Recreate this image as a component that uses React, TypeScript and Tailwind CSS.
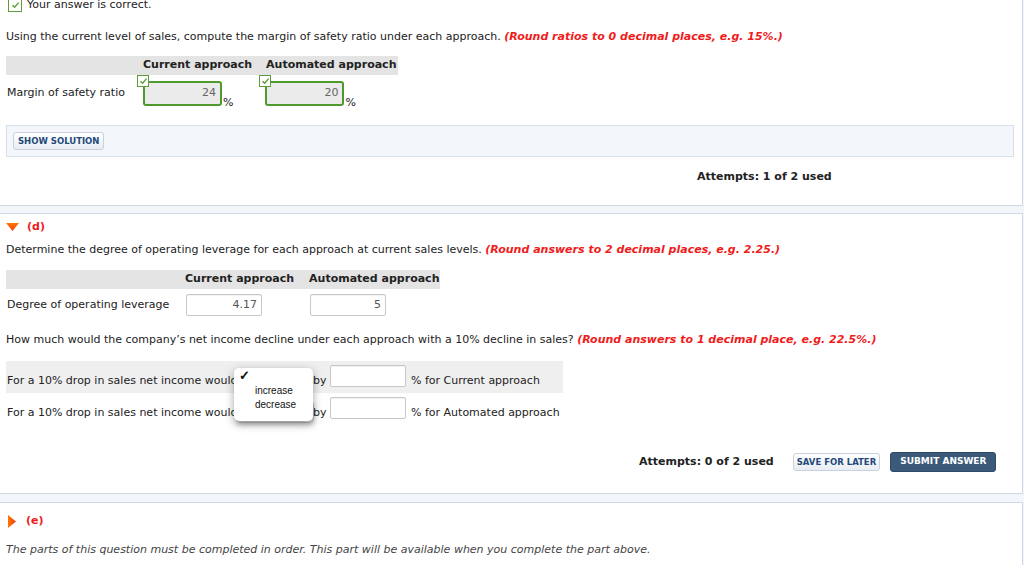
import React from "react";

function CheckBox({ className = "" }: { className?: string }) {
  return (
    <span className={`flex h-[12px] w-[12px] items-center justify-center border border-[#5d9c3a] bg-white ${className}`}>
      <svg width="9" height="8" viewBox="0 0 9 8">
        <path d="M1.5 4.2 L3.6 6.2 L7.6 1.6" fill="none" stroke="#5d9c3a" strokeWidth="1.4" />
      </svg>
    </span>
  );
}

function CorrectInput({ value }: { value: string }) {
  return (
    <div className="relative flex items-end">
      <CheckBox className="absolute left-[-6px] top-[-6px] z-10" />
      <div className="flex h-[25px] w-[79px] items-center justify-end rounded-[3px] border-2 border-[#4f9a2c] bg-[#ebebeb] pr-[4px] text-[#666]">
        {value}
      </div>
      <span className="mb-[-6px] ml-[1px]">%</span>
    </div>
  );
}

function Box({ value = "" }: { value?: string }) {
  return (
    <div className="flex h-[22px] w-[76px] items-center justify-end rounded-[2px] border border-[#c8c8c8] bg-white pr-[4px] text-[#555] shadow-[inset_0_1px_1px_rgba(0,0,0,0.06)]">
      {value}
    </div>
  );
}

const red = "font-bold italic text-[#f01b1b]";

function DropRow({ tail, bg }: { tail: string; bg: string }) {
  return (
    <div className={`flex h-[32px] items-start pt-[4px] ${bg}`}>
      <span className="mt-[8px] w-[307px] pl-[1px] leading-[16px]">For a 10% drop in sales net income would</span>
      <span className="mt-[8px] w-[17px] leading-[16px]">by</span>
      <Box />
      <span className="ml-[5px] mt-[8px] leading-[16px]">{tail}</span>
    </div>
  );
}

export default function App() {
  return (
    <div
      className="h-[565px] w-[1024px] overflow-hidden bg-[#f2f6fa] text-[11px] text-[#222]"
      style={{ fontFamily: '"DejaVu Sans", Verdana, sans-serif' }}
    >
      {/* panel c */}
      <div className="-ml-px -mt-[6px] h-[212px] w-[1024px] border border-[#d0dae6] bg-white">
        <div className="flex h-[20px] items-center gap-[5px] pl-[8px]">
          <CheckBox className="h-[14px] w-[14px]" />
          <span>Your answer is correct.</span>
        </div>
        <div className="mt-[14px] flex h-[16px] items-center pl-[6px]">
          Using the current level of sales, compute the margin of safety ratio under each approach.&nbsp;
          <span className={red}>(Round ratios to 0 decimal places, e.g. 15%.)</span>
        </div>
        <div className="ml-[6px] mt-[11px] w-[392px]">
          <div className="flex h-[19px] items-center whitespace-nowrap bg-[#e4e4e4] font-bold">
            <span className="ml-[137px]">Current approach</span>
            <span className="ml-[14px]">Automated approach</span>
          </div>
          <div className="flex h-[36px] items-center">
            <span className="w-[137px] pl-[1px]">Margin of safety ratio</span>
            <CorrectInput value="24" />
            <div className="ml-[32px]">
              <CorrectInput value="20" />
            </div>
          </div>
        </div>
        <div className="ml-[6px] mt-[14px] flex h-[32px] w-[1008px] items-center border border-[#d6dfea] bg-[#f3f7fb] pl-[6px]">
          <button className="h-[18px] rounded-[3px] border border-[#c9d2dc] bg-gradient-to-b from-white to-[#e8edf2] px-[4px] text-[8.5px] font-bold text-[#24487a]">
            SHOW SOLUTION
          </button>
        </div>
        <div className="mt-[12px] flex h-[16px] items-center pl-[697px] font-bold">Attempts: 1 of 2 used</div>
      </div>

      {/* panel d */}
      <div className="-ml-px mt-[7px] h-[281px] w-[1024px] border border-[#d0dae6] bg-white">
        <div className="mt-[5px] flex h-[16px] items-center gap-[8px] pl-[6px]">
          <svg width="13" height="8" viewBox="0 0 13 8">
            <defs>
              <linearGradient id="gd" x1="0" y1="0" x2="0" y2="1">
                <stop offset="0" stopColor="#ff7a00" />
                <stop offset="1" stopColor="#f23a12" />
              </linearGradient>
            </defs>
            <path d="M0 0 L13 0 L6.5 8 Z" fill="url(#gd)" />
          </svg>
          <span className="font-bold text-[#f01b1b]">(d)</span>
        </div>
        <div className="mt-[7px] flex h-[16px] items-center pl-[6px]">
          Determine the degree of operating leverage for each approach at current sales levels.&nbsp;
          <span className={red}>(Round answers to 2 decimal places, e.g. 2.25.)</span>
        </div>
        <div className="ml-[6px] mt-[12px] w-[434px]">
          <div className="flex h-[19px] items-center whitespace-nowrap bg-[#e4e4e4] font-bold">
            <span className="ml-[179px]">Current approach</span>
            <span className="ml-[15px]">Automated approach</span>
          </div>
          <div className="flex h-[32px] items-center">
            <span className="w-[180px] pl-[1px]">Degree of operating leverage</span>
            <Box value="4.17" />
            <div className="ml-[48px]">
              <Box value="5" />
            </div>
          </div>
        </div>
        <div className="mt-[11px] flex h-[16px] items-center pl-[6px]">
          How much would the company’s net income decline under each approach with a 10% decline in sales?&nbsp;
          <span className={red}>(Round answers to 1 decimal place, e.g. 22.5%.)</span>
        </div>
        <div className="relative ml-[6px] mt-[13px] w-[557px]">
          <DropRow tail="% for Current approach" bg="bg-[#efefef]" />
          <DropRow tail="% for Automated approach" bg="bg-white" />
          <div className="absolute left-[230px] top-[40px] h-[22px] w-[78px] rounded-[4px] border border-[#bbb] bg-gradient-to-b from-[#fbfbfb] to-[#d8d8d8] shadow-[0_2px_4px_rgba(0,0,0,0.2)]" />
          <div
            className="absolute left-[228px] top-[7px] flex h-[53px] w-[79px] flex-col rounded-[5px] bg-white text-[10px] text-[#111] shadow-[0_3px_10px_rgba(0,0,0,0.35)]"
            style={{ fontFamily: '"Liberation Sans", Arial, sans-serif' }}
          >
            <span className="ml-[5px] mt-[1px] h-[15px] text-[13px] font-bold leading-[14px]">✓</span>
            <span className="ml-[21px] leading-[14px]">increase</span>
            <span className="ml-[21px] leading-[14px]">decrease</span>
          </div>
        </div>
        <div className="mt-[27px] flex h-[20px] items-center">
          <span className="ml-[639px] font-bold">Attempts: 0 of 2 used</span>
          <button className="ml-[19px] h-[18px] rounded-[3px] border border-[#c9d2dc] bg-gradient-to-b from-white to-[#e8edf2] px-[3px] text-[8.5px] font-bold text-[#24487a]">
            SAVE FOR LATER
          </button>
          <button className="ml-[10px] h-[20px] rounded-[3px] border border-[#2e4a66] bg-[#3b5a7a] px-[9px] text-[9px] font-bold text-white">
            SUBMIT ANSWER
          </button>
        </div>
      </div>

      {/* panel e */}
      <div className="-ml-px mt-[8px] h-[80px] w-[1024px] border border-[#d0dae6] bg-white">
        <div className="mt-[10px] flex h-[16px] items-center gap-[10px] pl-[8px]">
          <svg width="8" height="13" viewBox="0 0 8 13">
            <defs>
              <linearGradient id="ge" x1="0" y1="0" x2="1" y2="0">
                <stop offset="0" stopColor="#ff7a00" />
                <stop offset="1" stopColor="#f23a12" />
              </linearGradient>
            </defs>
            <path d="M0 0 L8 6.5 L0 13 Z" fill="url(#ge)" />
          </svg>
          <span className="font-bold text-[#f01b1b]">(e)</span>
        </div>
        <div className="mt-[13px] flex h-[16px] items-center pl-[6px] italic text-[#444]">
          The parts of this question must be completed in order. This part will be available when you complete the part above.
        </div>
      </div>
    </div>
  );
}
